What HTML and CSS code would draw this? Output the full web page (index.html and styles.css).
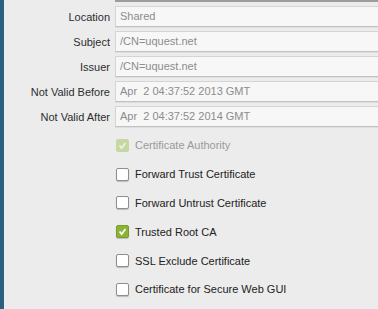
FILE: index.html
```html
<!DOCTYPE html>
<html>
<head>
<meta charset="utf-8">
<link rel="stylesheet" href="styles.css">
</head>
<body>
<div class="page">
  <div class="sidebar"></div>
  <div class="main">
    <div class="topbar"></div>
    <div class="form">
      <label class="lbl">Location</label><div class="field">Shared</div>
      <label class="lbl">Subject</label><div class="field">/CN=uquest.net</div>
      <label class="lbl">Issuer</label><div class="field">/CN=uquest.net</div>
      <label class="lbl">Not Valid Before</label><div class="field">Apr&nbsp; 2 04:37:52 2013 GMT</div>
      <label class="lbl">Not Valid After</label><div class="field">Apr&nbsp; 2 04:37:52 2014 GMT</div>
    </div>
    <div class="checks">
      <div class="row disabled"><span class="box checked"><svg viewBox="0 0 13 13"><path d="M3 6.5 L5.5 9.5 L10 3.5" /></svg></span><span>Certificate Authority</span></div>
      <div class="row"><span class="box"></span><span>Forward Trust Certificate</span></div>
      <div class="row"><span class="box"></span><span>Forward Untrust Certificate</span></div>
      <div class="row"><span class="box checked"><svg viewBox="0 0 13 13"><path d="M3 6.5 L5.5 9.5 L10 3.5" /></svg></span><span>Trusted Root CA</span></div>
      <div class="row"><span class="box"></span><span>SSL Exclude Certificate</span></div>
      <div class="row"><span class="box"></span><span>Certificate for Secure Web GUI</span></div>
    </div>
  </div>
</div>
</body>
</html>
```
FILE: styles.css
```css
html, body {
  margin: 0;
  padding: 0;
  background: #ececec;
  overflow: hidden;
}
body {
  font-family: "Liberation Sans", "DejaVu Sans", sans-serif;
  font-size: 11px;
  color: #2a2a2a;
}
.page {
  display: flex;
  height: 309px;
  width: 378px;
  overflow: hidden;
}
.sidebar {
  width: 4px;
  flex: none;
  background: #2d5f80;
  border-right: 1px solid #f2eef0;
}
.main {
  flex: 1;
  min-width: 0;
}
.topbar {
  margin-left: 110px;
  height: 2px;
  background: #9c9c9c;
}
.form {
  display: grid;
  grid-template-columns: 105px 1fr;
  column-gap: 5px;
  row-gap: 4px;
  margin-top: 4px;
}
.lbl {
  text-align: right;
  align-self: center;
  color: #2c2c2c;
  white-space: nowrap;
}
.field {
  height: 19px;
  line-height: 19px;
  background: #f7f7f7;
  border: 1px solid #d4d4d4;
  border-bottom-color: #c2c2c2;
  border-right: none;
  box-shadow: 0 1px 0 #dedede;
  padding-left: 4px;
  color: #8c8c8c;
  white-space: nowrap;
}
.checks {
  margin-top: 4px;
  margin-left: 111px;
}
.row {
  height: 28.8px;
  display: flex;
  align-items: center;
  gap: 6px;
  color: #222;
}
.row.disabled {
  color: #9a9a9a;
}
.box {
  width: 13px;
  height: 13px;
  box-sizing: border-box;
  border: 1px solid #8e8e8e;
  border-radius: 2px;
  background: #fff;
  box-shadow: 0 1px 1px rgba(0,0,0,0.2);
  display: inline-flex;
}
.box svg {
  width: 11px;
  height: 11px;
}
.box svg path {
  fill: none;
  stroke: #fff;
  stroke-width: 2;
}
.box.checked {
  background: #8cb336;
  border-color: #7a9d2c;
}
.disabled .box.checked {
  background: #c6d8a2;
  border-color: #c6d8a2;
  box-shadow: none;
}
.disabled .box.checked svg path {
  stroke: #eef4e0;
}
```
